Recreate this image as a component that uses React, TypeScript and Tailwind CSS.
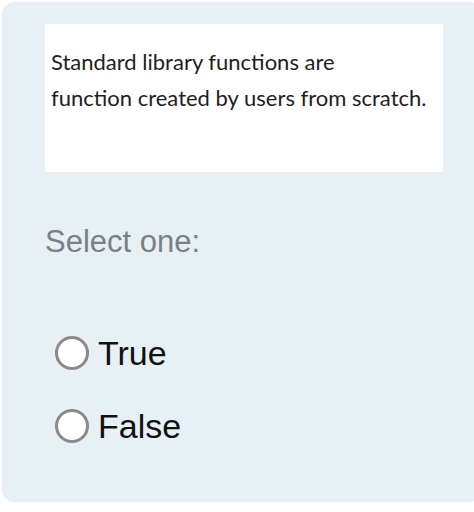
import React from 'react';

function Radio({ label }: { label: string }) {
  return (
    <label className="flex items-center gap-[9px] h-[36px]">
      <span className="block w-[34px] h-[34px] rounded-full border-[3px] border-[#8a8a8a] bg-white" />
      <span className="text-[34px] leading-none text-[#111] font-['Liberation_Sans',Arial,sans-serif]">{label}</span>
    </label>
  );
}

export default function App() {
  return (
    <div className="w-[474px] h-[512px] bg-white pt-[2px] pl-[2px] overflow-hidden">
      <div className="w-[480px] h-[500px] bg-[#e7f1f5] rounded-[12px] pt-[22px] pl-[43px]">
        <div className="w-[398px] h-[148px] bg-white pl-[6px] pt-[20px] font-['Lato','Open_Sans',sans-serif] text-[22px] leading-[36px] text-[#1e1e1e]">
          <p>Standard library functions are</p>
          <p>function created by users from scratch.</p>
        </div>
        <div className="mt-[54px] text-[31px] leading-none text-[#7b8082] font-['Liberation_Sans',Arial,sans-serif]">
          Select one:
        </div>
        <div className="mt-[78px] ml-[10px] flex flex-col gap-[37px]">
          <Radio label="True" />
          <Radio label="False" />
        </div>
      </div>
    </div>
  );
}
